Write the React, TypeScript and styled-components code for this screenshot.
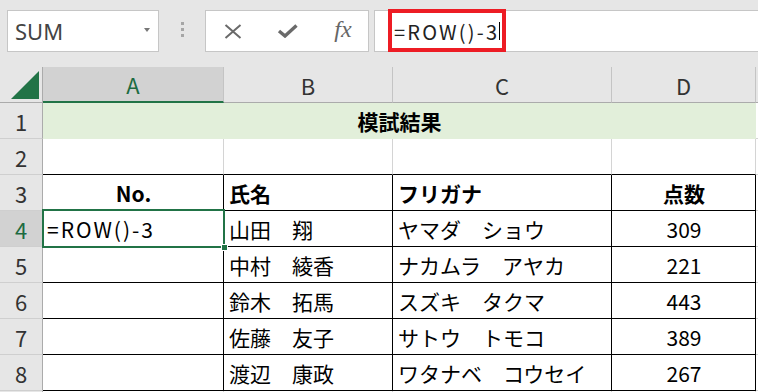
import React from "react";
import styled, { createGlobalStyle } from "styled-components";

const GlobalStyle = createGlobalStyle`
  html, body {
    margin: 0;
    padding: 0;
    background: #e6e6e6;
    overflow: hidden;
  }
  body {
    font-family: "Noto Sans CJK JP", "Noto Sans", sans-serif;
  }
`;

const GRID = "#d4d4d4";
const BLACK = "#000000";
const GREEN = "#217346";
const TITLE_BG = "#e2efda";

const Window = styled.div`
  width: 758px;
  height: 392px;
  overflow: hidden;
  display: flex;
  flex-direction: column;
  background: #e6e6e6;
`;

const Toolbar = styled.div`
  flex: none;
  height: 67px;
  box-sizing: border-box;
  padding: 10px 0 0 7px;
  display: flex;
  align-items: flex-start;
`;

const NameBox = styled.div`
  width: 152px;
  height: 42px;
  box-sizing: border-box;
  background: #fff;
  border: 1px solid #c6c6c6;
  display: flex;
  align-items: center;
  justify-content: space-between;
  padding: 0 8px 0 7px;
  font-family: "Noto Sans", sans-serif;
  font-size: 22px;
  color: #444;
`;

const DropArrow = styled.span`
  width: 0;
  height: 0;
  border-left: 3.5px solid transparent;
  border-right: 3.5px solid transparent;
  border-top: 4px solid #777;
  margin-top: -2px;
`;

const Separator = styled.div`
  width: 46px;
  height: 42px;
  box-sizing: border-box;
  padding-top: 12px;
  display: flex;
  flex-direction: column;
  align-items: center;
  gap: 3px;
`;

const Dot = styled.span`
  width: 3px;
  height: 3px;
  background: #a6a6a6;
`;

const FuncBox = styled.div`
  width: 164px;
  height: 42px;
  box-sizing: border-box;
  background: #fff;
  border: 1px solid #c6c6c6;
  display: grid;
  grid-template-columns: repeat(3, 1fr);
  align-items: center;
  justify-items: center;
`;

const Fx = styled.span`
  font-family: "Liberation Serif", "DejaVu Serif", serif;
  font-style: italic;
  font-size: 24px;
  color: #666;
  margin-top: -4px;
  margin-left: 4px;
`;

const FormulaBar = styled.div`
  position: relative;
  flex: 1;
  height: 42px;
  box-sizing: border-box;
  margin-left: 5px;
  margin-right: -4px;
  background: #fff;
  border: 1px solid #c6c6c6;
  display: flex;
  align-items: center;
  padding-left: 19px;
  font-size: 20px;
  color: #222;
`;

const FormulaText = styled.span`
  letter-spacing: 2.2px;
`;

const Caret = styled.span`
  display: inline-block;
  width: 1px;
  height: 18px;
  background: #000;
`;

const Highlight = styled.div`
  position: absolute;
  left: 13px;
  top: -2px;
  width: 118px;
  height: 43px;
  box-sizing: border-box;
  border: 4px solid #ed1c24;
  pointer-events: none;
`;

const Sheet = styled.div`
  flex: 1;
  display: grid;
  grid-template-columns: 43px 181px 169px 219px 144px 1fr;
  grid-template-rows: repeat(10, 36px);
  background: #fff;
`;

const Corner = styled.div`
  background: #e6e6e6;
  box-sizing: border-box;
  border-right: 1px solid #ababab;
  border-bottom: 1px solid #ababab;
`;

const ColHead = styled.div<{ $selected?: boolean }>`
  box-sizing: border-box;
  background: ${(p) => (p.$selected ? "#d2d2d2" : "#e6e6e6")};
  border-right: 1px solid #c4c4c4;
  border-bottom: ${(p) => (p.$selected ? `2px solid ${GREEN}` : "1px solid #ababab")};
  display: flex;
  align-items: center;
  justify-content: center;
  font-size: 22px;
  color: ${(p) => (p.$selected ? "#1d6b41" : "#333")};
`;

const RowHead = styled.div<{ $selected?: boolean }>`
  box-sizing: border-box;
  background: ${(p) => (p.$selected ? "#d2d2d2" : "#e6e6e6")};
  border-right: 1px solid #ababab;
  border-bottom: 1px solid #cfcfcf;
  display: flex;
  align-items: center;
  justify-content: center;
  font-size: 22px;
  color: ${(p) => (p.$selected ? "#1d6b41" : "#333")};
`;

const Cell = styled.div<{
  $right: string;
  $bottom: string;
  $align?: "left" | "center";
  $bold?: boolean;
  $bg?: string;
  $span?: number;
  $selected?: boolean;
}>`
  position: relative;
  box-sizing: border-box;
  grid-column: span ${(p) => p.$span ?? 1};
  background: ${(p) => p.$bg ?? "#fff"};
  border-right: 1px solid ${(p) => p.$right};
  border-bottom: 1px solid ${(p) => p.$bottom};
  display: flex;
  align-items: center;
  justify-content: ${(p) => (p.$align === "center" ? "center" : "flex-start")};
  padding: 0 4px 0 5px;
  font-size: 21px;
  font-weight: ${(p) => (p.$bold ? 700 : 400)};
  color: #000;
  white-space: pre;
  z-index: ${(p) => (p.$selected ? 2 : 0)};

  ${(p) =>
    p.$selected &&
    `
    padding-left: 4px;
    letter-spacing: 2px;
    &::after {
      content: "";
      position: absolute;
      top: -2px;
      left: -1px;
      right: -2px;
      bottom: -2px;
      border: 2px solid ${GREEN};
    }
    &::before {
      content: "";
      position: absolute;
      right: -5px;
      bottom: -5px;
      width: 5px;
      height: 5px;
      background: ${GREEN};
      border: 1px solid #fff;
      z-index: 3;
    }
  `}
`;

type Row = {
  n: number;
  cells: string[];
};

const rows: Row[] = [
  { n: 3, cells: ["No.", "氏名", "フリガナ", "点数"] },
  { n: 4, cells: ["=ROW()-3", "山田　翔", "ヤマダ　ショウ", "309"] },
  { n: 5, cells: ["", "中村　綾香", "ナカムラ　アヤカ", "221"] },
  { n: 6, cells: ["", "鈴木　拓馬", "スズキ　タクマ", "443"] },
  { n: 7, cells: ["", "佐藤　友子", "サトウ　トモコ", "389"] },
  { n: 8, cells: ["", "渡辺　康政", "ワタナベ　コウセイ", "267"] },
];

const columns = ["A", "B", "C", "D", ""];
const aligns: ("left" | "center")[] = ["left", "left", "left", "center"];

export default function App() {
  return (
    <>
      <GlobalStyle />
      <Window>
        <Toolbar>
          <NameBox>
            SUM
            <DropArrow />
          </NameBox>
          <Separator>
            <Dot />
            <Dot />
            <Dot />
          </Separator>
          <FuncBox>
            <svg width="18" height="15" viewBox="0 0 18 15">
              <path d="M1.5 1 L16.5 14 M16.5 1 L1.5 14" stroke="#6a6a6a" strokeWidth="2" fill="none" />
            </svg>
            <svg width="21" height="14" viewBox="0 0 21 14">
              <path d="M2 7 L8 12 L19.5 1.5" stroke="#6a6a6a" strokeWidth="3.4" fill="none" />
            </svg>
            <Fx>fx</Fx>
          </FuncBox>
          <FormulaBar>
            <FormulaText>=ROW()-3</FormulaText>
            <Caret />
            <Highlight />
          </FormulaBar>
        </Toolbar>

        <Sheet>
          <Corner>
            <svg width="42" height="35" viewBox="0 0 42 35">
              <polygon points="11,32 39,4 39,32" fill={GREEN} />
            </svg>
          </Corner>
          {columns.map((c, i) => (
            <ColHead key={i} $selected={c === "A"}>
              {c}
            </ColHead>
          ))}

          <RowHead>1</RowHead>
          <Cell $span={4} $bg={TITLE_BG} $right={TITLE_BG} $bottom={TITLE_BG} $align="center" $bold>
            模試結果
          </Cell>
          <Cell $right={GRID} $bottom={GRID} />

          <RowHead>2</RowHead>
          {[0, 1, 2, 3].map((i) => (
            <Cell key={i} $right={GRID} $bottom={BLACK} />
          ))}
          <Cell $right={GRID} $bottom={GRID} />

          {rows.map((r) => (
            <React.Fragment key={r.n}>
              <RowHead $selected={r.n === 4}>{r.n}</RowHead>
              {r.cells.map((text, i) => (
                <Cell
                  key={i}
                  $right={BLACK}
                  $bottom={BLACK}
                  $bold={r.n === 3}
                  $align={r.n === 3 && i === 0 ? "center" : aligns[i]}
                  $selected={r.n === 4 && i === 0}
                >
                  {text}
                </Cell>
              ))}
              <Cell $right={GRID} $bottom={GRID} />
            </React.Fragment>
          ))}

          <RowHead />
          {[0, 1, 2, 3, 4].map((i) => (
            <Cell key={i} $right={GRID} $bottom={GRID} />
          ))}
        </Sheet>
      </Window>
    </>
  );
}
